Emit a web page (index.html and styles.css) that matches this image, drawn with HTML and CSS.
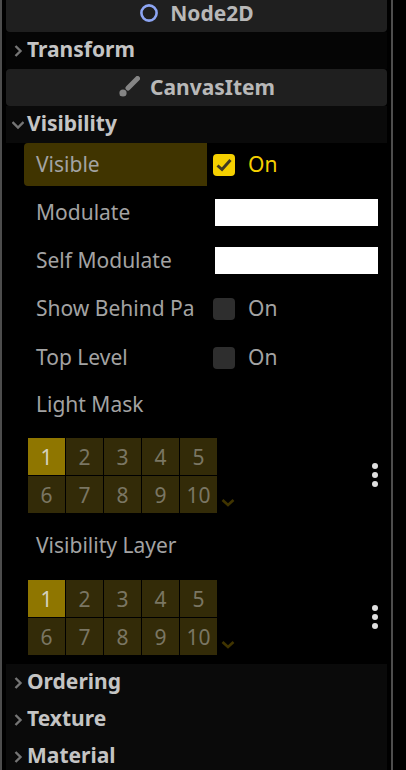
FILE: index.html
```html
<!DOCTYPE html>
<html lang="en">
<head>
    <meta charset="UTF-8">
    <meta name="viewport" content="width=device-width, initial-scale=1.0">
    <title>Inspector</title>
    <link rel="stylesheet" href="styles.css">
</head>
<body>
    <div class="inspector">
        <div class="class-header node-header">
            <svg class="icon" width="18" height="18" viewBox="0 0 18 18"><circle cx="9" cy="9" r="7.6" fill="none" stroke="#8da5f3" stroke-width="2.6"/></svg>
            <span>Node2D</span>
        </div>
        <div class="section closed-top">
            <svg class="chev" width="10" height="12" viewBox="0 0 10 12"><path d="M2.5 1 L7.5 6 L2.5 11" fill="none" stroke="#757575" stroke-width="2.4"/></svg>
            <span>Transform</span>
        </div>
        <div class="class-header canvas-header">
            <svg class="icon brush" width="22" height="22" viewBox="0 0 22 22"><path d="M19.5 2.5 L10 12" fill="none" stroke="#858585" stroke-width="5" stroke-linecap="round"/><circle cx="5" cy="17" r="3.6" fill="#858585"/><path d="M1.5 20 L7 14 L8 18 Z" fill="#858585"/></svg>
            <span>CanvasItem</span>
        </div>
        <div class="section open">
            <svg class="chev-down" width="12" height="10" viewBox="0 0 12 10"><path d="M0.5 2 L6 7.5 L11.5 2" fill="none" stroke="#757575" stroke-width="2.4"/></svg>
            <span>Visibility</span>
        </div>
        <div class="props">
            <div class="prop">
                <div class="label active">Visible</div>
                <div class="check on"><svg width="18" height="16" viewBox="0 0 18 16"><path d="M2.5 8.5 L7 12.5 L15.5 3" fill="none" stroke="#403a22" stroke-width="3"/></svg></div>
                <span class="on-text lit">On</span>
            </div>
            <div class="prop">
                <div class="label">Modulate</div>
                <div class="swatch"></div>
            </div>
            <div class="prop">
                <div class="label">Self Modulate</div>
                <div class="swatch"></div>
            </div>
            <div class="prop wide-gap">
                <div class="label">Show Behind Pa</div>
                <div class="check"></div>
                <span class="on-text">On</span>
            </div>
            <div class="prop">
                <div class="label">Top Level</div>
                <div class="check"></div>
                <span class="on-text">On</span>
            </div>
            <div class="prop-title">Light Mask</div>
            <div class="layers">
                <div class="grid">
                    <div class="cell sel">1</div><div class="cell">2</div><div class="cell">3</div><div class="cell">4</div><div class="cell">5</div>
                    <div class="cell">6</div><div class="cell">7</div><div class="cell">8</div><div class="cell">9</div><div class="cell">10</div>
                </div>
                <svg class="more" width="14" height="10" viewBox="0 0 14 10"><path d="M1.5 2 L7 7 L12.5 2" fill="none" stroke="#403400" stroke-width="2.6"/></svg>
                <div class="dots"><i></i><i></i><i></i></div>
            </div>
            <div class="prop-title second">Visibility Layer</div>
            <div class="layers">
                <div class="grid">
                    <div class="cell sel">1</div><div class="cell">2</div><div class="cell">3</div><div class="cell">4</div><div class="cell">5</div>
                    <div class="cell">6</div><div class="cell">7</div><div class="cell">8</div><div class="cell">9</div><div class="cell">10</div>
                </div>
                <svg class="more" width="14" height="10" viewBox="0 0 14 10"><path d="M1.5 2 L7 7 L12.5 2" fill="none" stroke="#403400" stroke-width="2.6"/></svg>
                <div class="dots"><i></i><i></i><i></i></div>
            </div>
        </div>
        <div class="bottom">
            <div class="section">
                <svg class="chev" width="10" height="12" viewBox="0 0 10 12"><path d="M2.5 1 L7.5 6 L2.5 11" fill="none" stroke="#757575" stroke-width="2.4"/></svg>
                <span>Ordering</span>
            </div>
            <div class="section">
                <svg class="chev" width="10" height="12" viewBox="0 0 10 12"><path d="M2.5 1 L7.5 6 L2.5 11" fill="none" stroke="#757575" stroke-width="2.4"/></svg>
                <span>Texture</span>
            </div>
            <div class="section">
                <svg class="chev" width="10" height="12" viewBox="0 0 10 12"><path d="M2.5 1 L7.5 6 L2.5 11" fill="none" stroke="#757575" stroke-width="2.4"/></svg>
                <span>Material</span>
            </div>
        </div>
    </div>
</body>
</html>
```

FILE: styles.css
```css
* {
    margin: 0;
    padding: 0;
    box-sizing: border-box;
}

html, body {
    height: 770px;
    overflow: hidden;
    background: #000;
}

body {
    font-family: "Noto Sans", sans-serif;
    font-size: 21px;
    color: #a3a3a3;
}

.inspector {
    width: 393px;
    height: 770px;
    padding: 0 4px;
    background: #000;
    border-left: 2px solid #4d4d4d;
    border-right: 2px solid #4d4d4d;
    overflow: hidden;
}

.class-header {
    display: flex;
    justify-content: center;
    align-items: center;
    gap: 12px;
    width: 381px;
    background: #1f1f1f;
    border-radius: 4px;
    font-weight: bold;
    color: #b8b8b8;
    line-height: 34px;
}

.node-header {
    height: 32px;
    padding: 0 0 7px 1px;
    border-radius: 0 0 4px 4px;
}

.canvas-header {
    height: 37px;
    padding-bottom: 2px;
    gap: 10px;
}

.section {
    display: flex;
    align-items: center;
    height: 37px;
    line-height: 34px;
    font-weight: bold;
    color: #c4c4c4;
    background: #050505;
}

.section span {
    margin-bottom: 4px;
}

.section.open {
    background: #0a0a0a;
}

.chev {
    margin: 0 4px 0 7px;
    flex-shrink: 0;
}

.chev-down {
    margin: 0 3px 0 6px;
    flex-shrink: 0;
}

.props {
    height: 521px;
}

.prop {
    display: flex;
    align-items: center;
    height: 43px;
    margin-bottom: 5px;
    padding-left: 18px;
}

.prop.wide-gap {
    margin-bottom: 6px;
}

.label {
    width: 183px;
    height: 100%;
    padding-left: 12px;
    line-height: 42px;
    white-space: nowrap;
    overflow: hidden;
}

.label.active {
    background: #403400;
    border-radius: 4px 0 0 4px;
}

.check {
    display: flex;
    justify-content: center;
    align-items: center;
    width: 22px;
    height: 22px;
    margin-left: 6px;
    background: #2e2e2e;
    border-radius: 4px;
}

.check.on {
    background: #f5d000;
}

.on-text {
    margin-left: 13px;
    line-height: 43px;
}

.on-text.lit {
    color: #f5d000;
}

.swatch {
    width: 163px;
    height: 27px;
    margin-left: 8px;
    background: #fff;
}

.prop-title {
    height: 44px;
    line-height: 42px;
    padding-left: 30px;
    margin-top: -1px;
}

.prop-title.second {
    height: 67px;
    margin-top: 0;
    padding-top: 11px;
}

.layers {
    position: relative;
    height: 75px;
    margin: 11px 0 0 22px;
    display: flex;
}

.prop-title.second + .layers {
    margin-top: 0;
}

.grid {
    display: grid;
    grid-template-columns: repeat(5, 37px);
    grid-template-rows: repeat(2, 37px);
    gap: 1px;
    width: 189px;
}

.cell {
    display: flex;
    justify-content: center;
    align-items: center;
    background: #332b08;
    color: #7a7663;
}

.cell.sel {
    background: #8f7600;
    color: #d6d2c0;
}

.more {
    margin: 60px 0 0 4px;
}

.dots {
    display: flex;
    flex-direction: column;
    gap: 3px;
    margin: 25px 0 0 auto;
    padding-right: 9px;
}

.dots i {
    display: block;
    width: 6px;
    height: 6px;
    border-radius: 50%;
    background: #e0e0e0;
}

.bottom {
    width: 381px;
}

.bottom .section {
    background: #0a0a0a;
}
```
